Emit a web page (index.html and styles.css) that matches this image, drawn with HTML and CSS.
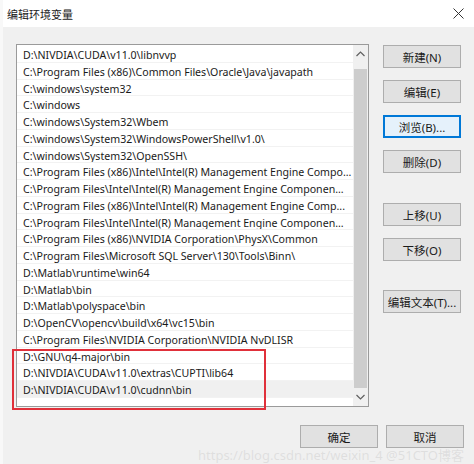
FILE: index.html
```html
<!DOCTYPE html>
<html lang="zh-CN">
<head>
    <meta charset="UTF-8">
    <title>编辑环境变量</title>
    <link rel="stylesheet" href="styles.css">
</head>
<body>
    <div class="window">
        <div class="titlebar">
            <span class="title">编辑环境变量</span>
            <svg class="close" width="11" height="11" viewBox="0 0 11 11">
                <path d="M0.5 0.5 L10.5 10.5 M10.5 0.5 L0.5 10.5" stroke="#333" stroke-width="1" fill="none"/>
            </svg>
        </div>

        <div class="content">
            <div class="list">
                <div class="rows">
                    <div class="row">D:\NIVDIA\CUDA\v11.0\libnvvp</div>
                    <div class="row">C:\Program Files (x86)\Common Files\Oracle\Java\javapath</div>
                    <div class="row">C:\windows\system32</div>
                    <div class="row">C:\windows</div>
                    <div class="row">C:\windows\System32\Wbem</div>
                    <div class="row">C:\windows\System32\WindowsPowerShell\v1.0\</div>
                    <div class="row">C:\windows\System32\OpenSSH\</div>
                    <div class="row">C:\Program Files (x86)\Intel\Intel(R) Management Engine Compo...</div>
                    <div class="row">C:\Program Files\Intel\Intel(R) Management Engine Componen...</div>
                    <div class="row">C:\Program Files (x86)\Intel\Intel(R) Management Engine Comp...</div>
                    <div class="row">C:\Program Files\Intel\Intel(R) Management Engine Componen...</div>
                    <div class="row">C:\Program Files (x86)\NVIDIA Corporation\PhysX\Common</div>
                    <div class="row">C:\Program Files\Microsoft SQL Server\130\Tools\Binn\</div>
                    <div class="row">D:\Matlab\runtime\win64</div>
                    <div class="row">D:\Matlab\bin</div>
                    <div class="row">D:\Matlab\polyspace\bin</div>
                    <div class="row">D:\OpenCV\opencv\build\x64\vc15\bin</div>
                    <div class="row">C:\Program Files\NVIDIA Corporation\NVIDIA NvDLISR</div>
                    <div class="row">D:\GNU\q4-major\bin</div>
                    <div class="row">D:\NIVDIA\CUDA\v11.0\extras\CUPTI\lib64</div>
                    <div class="row selected">D:\NIVDIA\CUDA\v11.0\cudnn\bin</div>
                </div>
                <div class="scrollbar">
                    <svg class="arrow" width="9" height="6" viewBox="0 0 9 6">
                        <path d="M0.5 5 L4.5 1 L8.5 5" stroke="#606060" stroke-width="1.2" fill="none"/>
                    </svg>
                    <div class="thumb"></div>
                    <svg class="arrow" width="9" height="6" viewBox="0 0 9 6">
                        <path d="M0.5 1 L4.5 5 L8.5 1" stroke="#606060" stroke-width="1.2" fill="none"/>
                    </svg>
                </div>
            </div>

            <div class="side">
                <div class="group">
                    <button>新建(N)</button>
                    <button>编辑(E)</button>
                    <button class="focused">浏览(B)...</button>
                    <button>删除(D)</button>
                </div>
                <div class="group move">
                    <button>上移(U)</button>
                    <button>下移(O)</button>
                </div>
                <div class="group text-edit">
                    <button>编辑文本(T)...</button>
                </div>
            </div>
        </div>

        <div class="footer">
            <button>确定</button>
            <button>取消</button>
        </div>

        <div class="mark"></div>
        <div class="watermark">https://blog.csdn.net/weixin_4 @51CTO博客</div>
    </div>
</body>
</html>
```

FILE: styles.css
```css
* {
    box-sizing: border-box;
}
body {
    margin: 0;
    background-color: #f0f0f0;
    font-family: "Noto Sans", "Noto Sans CJK SC", sans-serif;
    font-size: 12px;
    color: #1a1a1a;
}
.window {
    position: relative;
    width: 474px;
    height: 464px;
    background-color: #f0f0f0;
    border-left: 3px solid #f8f8f8;
    overflow: hidden;
}
.titlebar {
    height: 27px;
    margin-left: -3px;
    background: white;
    display: flex;
    align-items: center;
    justify-content: space-between;
    padding: 0 10px 0 7px;
}
.title {
    font-family: "Noto Sans CJK SC", sans-serif;
    font-size: 11px;
    color: #222;
}
.content {
    display: flex;
    padding: 17px 0 0 13px;
    gap: 14px;
}
.list {
    width: 353px;
    height: 363px;
    background: white;
    border: 1px solid #9a9a9a;
    display: flex;
}
.rows {
    flex: 1;
    min-width: 0;
    padding-top: 1px;
    font-size: 10.6px;
}
.row {
    height: 16.75px;
    line-height: 18px;
    padding-left: 6px;
    white-space: nowrap;
    overflow: hidden;
    border-bottom: 1px solid #f2f2f2;
}
.row.selected {
    background-color: #f0f0f0;
}
.scrollbar {
    width: 15px;
    background-color: #f0f0f0;
    display: flex;
    flex-direction: column;
    align-items: center;
}
.scrollbar .arrow {
    flex: none;
    margin: 6px 0;
}
.thumb {
    width: 13px;
    flex: 1;
    margin: 6px 0 0;
    background-color: #cdcdcd;
}
.side {
    width: 78px;
    padding-top: 1px;
}
.group {
    display: flex;
    flex-direction: column;
    gap: 12px;
}
.move {
    margin-top: 30px;
}
.text-edit {
    margin-top: 29px;
}
button {
    width: 78px;
    height: 23px;
    padding: 0;
    background-color: #e1e1e1;
    border: 1px solid #adadad;
    font-family: "Noto Sans", "Noto Sans CJK SC", sans-serif;
    font-size: 11.5px;
    color: #1a1a1a;
}
button.focused {
    background-color: #e5f1fb;
    border: 2px solid #0078d7;
}
.footer {
    display: flex;
    justify-content: flex-end;
    gap: 8px;
    padding-right: 10px;
    margin-top: 18px;
}
.mark {
    position: absolute;
    left: 9px;
    top: 349px;
    width: 254px;
    height: 61px;
    border: 2px solid #e0303a;
}
.watermark {
    position: absolute;
    right: 10px;
    top: 445px;
    font-size: 13px;
    color: rgba(170, 170, 170, 0.25);
    white-space: nowrap;
}
```
